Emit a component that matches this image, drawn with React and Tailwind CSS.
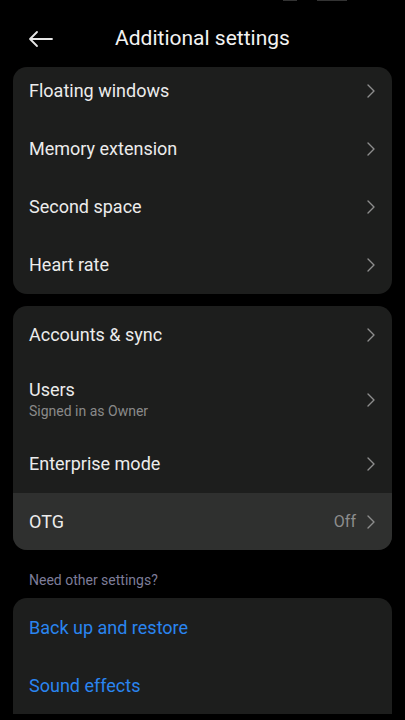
const GROUP_ONE = ['Floating windows', 'Memory extension', 'Second space', 'Heart rate']

function Chevron() {
  return (
    <svg width="10" height="16" viewBox="0 0 10 16" fill="none" className="shrink-0">
      <path d="M2 2l6 6-6 6" stroke="#8d8d8d" strokeWidth="1.4" strokeLinecap="round" strokeLinejoin="round" />
    </svg>
  )
}

function Row({ title, subtitle, value, active, className = '' }) {
  return (
    <div className={`flex items-center pl-4 pr-[16px] ${active ? 'bg-[#2f302f]' : ''} ${className}`}>
      <div className="flex-1 min-w-0">
        <div className="text-[18px] leading-[22px] text-[#ececec]">{title}</div>
        {subtitle && <div className="text-[14px] leading-[18px] text-[#8a8a8a] mt-[1px]">{subtitle}</div>}
      </div>
      {value && <span className="text-[16px] text-[#8d8d8d] mr-[10px]">{value}</span>}
      <Chevron />
    </div>
  )
}

export default function App() {
  return (
    <div className="w-[405px] h-[720px] overflow-hidden bg-black" style={{ fontFamily: 'Roboto, "Noto Sans", sans-serif' }}>
      <div className="h-[3px] flex justify-end gap-[20px] pr-[58px]">
        <div className="w-[14px] h-[1px] bg-[#333]" />
        <div className="w-[30px] h-[1px] bg-[#333]" />
      </div>
      <div className="h-[64px] pt-[7px] flex items-center">
        <div className="w-[60px] pl-[28px] flex items-center">
          <svg width="26" height="18" viewBox="0 0 26 18" fill="none">
            <path d="M24 9H2M9 2L2 9l7 7" stroke="#e6e6e6" strokeWidth="1.8" strokeLinecap="round" strokeLinejoin="round" />
          </svg>
        </div>
        <div className="flex-1 text-center text-[21px] text-[#f2f2f2]">Additional settings</div>
        <div className="w-[60px]" />
      </div>

      <div className="mx-[13px] bg-[#1d1e1d] rounded-[14px] overflow-hidden">
        {GROUP_ONE.map((t, i) => (
          <Row key={t} title={t} className={i === 0 ? 'h-[53px] pb-[5px]' : 'h-[58px]'} />
        ))}
      </div>

      <div className="mx-[13px] mt-[12px] bg-[#1d1e1d] rounded-[14px] overflow-hidden">
        <Row title="Accounts & sync" className="h-[58px]" />
        <Row title="Users" subtitle="Signed in as Owner" className="h-[71px]" />
        <Row title="Enterprise mode" className="h-[58px]" />
        <Row title="OTG" value="Off" active className="h-[57px]" />
      </div>

      <div className="px-[29px] pt-[20px] pb-[7px] text-[14px] text-[#7d7d99]">Need other settings?</div>

      <div className="mx-[13px] bg-[#1d1e1d] rounded-t-[14px] overflow-hidden">
        <div className="h-[58px] flex items-center pl-4 text-[18px] text-[#2a85f0]">Back up and restore</div>
        <div className="h-[58px] flex items-center pl-4 text-[18px] text-[#2a85f0]">Sound effects</div>
      </div>
    </div>
  )
}
